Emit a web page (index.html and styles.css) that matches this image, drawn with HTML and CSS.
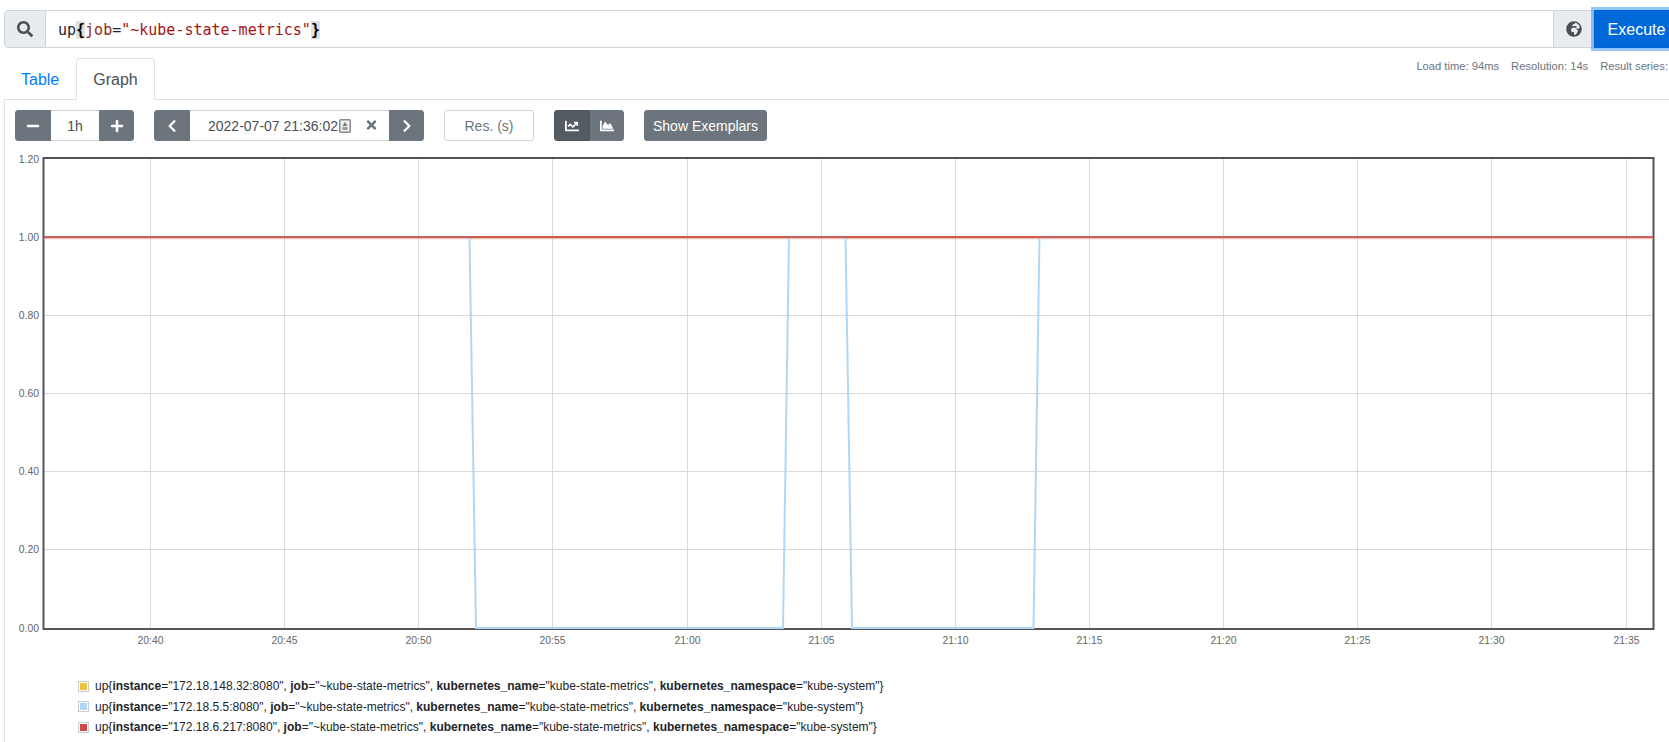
FILE: index.html
```html
<!DOCTYPE html>
<html lang="en">
<head>
    <meta charset="UTF-8">
    <meta name="viewport" content="width=device-width, initial-scale=1.0">
    <title>Prometheus Time Series Collection and Processing Server</title>
    <link rel="stylesheet" href="styles.css">
</head>
<body>
    <div class="query-row">
        <div class="prepend">
            <svg class="icon-search" viewBox="0 0 512 512"><path d="M505 442.7L405.3 343c-4.5-4.5-10.6-7-17-7H372c27.6-35.3 44-79.7 44-128C416 93.1 322.9 0 208 0S0 93.1 0 208s93.1 208 208 208c48.3 0 92.7-16.4 128-44v16.3c0 6.4 2.5 12.5 7 17l99.7 99.7c9.4 9.4 24.6 9.4 33.9 0l28.3-28.3c9.4-9.4 9.4-24.6.1-34zM208 336c-70.7 0-128-57.2-128-128 0-70.7 57.2-128 128-128 70.7 0 128 57.2 128 128 0 70.7-57.2 128-128 128z"/></svg>
        </div>
        <div class="expr"><span class="metric">up</span><span class="brace">{</span><span class="label-name">job</span><span class="metric">=</span><span class="label-value">"~kube-state-metrics"</span><span class="brace">}</span></div>
        <div class="append">
            <svg class="icon-globe" viewBox="0 0 496 512"><path d="M248 8C111.03 8 0 119.03 0 256s111.03 248 248 248 248-111.03 248-248S384.97 8 248 8zm160 215.5v6.93c0 5.87-3.32 11.24-8.57 13.86l-15.39 7.7a15.485 15.485 0 0 1-15.53-.97l-18.21-12.14a15.52 15.52 0 0 0-13.5-1.81l-2.65.88c-9.7 3.23-13.66 14.79-7.99 23.3l13.24 19.86c2.87 4.31 7.71 6.9 12.89 6.9h8.21c8.56 0 15.5 6.94 15.5 15.5v11.34c0 3.35-1.09 6.62-3.1 9.3l-18.74 24.98c-1.42 1.9-2.39 4.1-2.83 6.43l-4.3 22.83c-.62 3.29-2.29 6.29-4.76 8.56a159.608 159.608 0 0 0-25 29.16l-13.03 19.55a27.756 27.756 0 0 1-23.09 12.36c-10.51 0-20.12-5.94-24.82-15.34a78.902 78.902 0 0 1-8.33-35.29V367.5c0-8.56-6.94-15.5-15.5-15.5h-25.88c-14.49 0-28.38-5.76-38.63-16a54.659 54.659 0 0 1-16-38.63v-14.06c0-17.19 8.1-33.38 21.85-43.7l27.58-20.69a54.663 54.663 0 0 1 32.78-10.93h.89c8.48 0 16.85 1.97 24.43 5.77l14.72 7.36c3.68 1.84 7.93 2.14 11.83.84l47.31-15.77c6.33-2.11 10.6-8.03 10.6-14.7 0-8.56-6.94-15.5-15.5-15.5h-10.09c-4.11 0-8.05-1.63-10.96-4.54l-6.92-6.92a15.487 15.487 0 0 0-10.96-4.54H199.5c-8.56 0-15.5-6.94-15.5-15.5v-4.4c0-7.11 4.84-13.31 11.74-15.04l14.45-3.61c3.74-.94 7-3.23 9.14-6.44l8.08-12.11c2.87-4.31 7.71-6.9 12.89-6.9h24.21c8.56 0 15.5-6.94 15.5-15.5v-21.7C359.23 71.63 422.86 131.02 441.93 208H423.5c-8.56 0-15.5 6.94-15.5 15.5z"/></svg>
        </div>
        <button class="execute">Execute</button>
    </div>

    <div class="tab-row">
        <a class="tab">Table</a>
        <a class="tab active">Graph</a>
        <div class="stats">
            <span>Load time: 94ms</span>
            <span>Resolution: 14s</span>
            <span>Result series:</span>
        </div>
    </div>

    <div class="panel">
        <div class="controls">
            <div class="group">
                <button class="btn btn-step"><svg class="icon-14" viewBox="0 0 448 512"><path d="M416 208H32c-17.67 0-32 14.33-32 32v32c0 17.67 14.33 32 32 32h384c17.67 0 32-14.33 32-32v-32c0-17.67-14.33-32-32-32z"/></svg></button>
                <div class="field field-range">1h</div>
                <button class="btn btn-step-end"><svg class="icon-14" viewBox="0 0 448 512"><path d="M416 208H272V64c0-17.67-14.33-32-32-32h-32c-17.67 0-32 14.33-32 32v144H32c-17.67 0-32 14.33-32 32v32c0 17.67 14.33 32 32 32h144v144c0 17.67 14.33 32 32 32h32c17.67 0 32-14.33 32-32V304h144c17.67 0 32-14.33 32-32v-32c0-17.67-14.33-32-32-32z"/></svg></button>
            </div>
            <div class="group">
                <button class="btn btn-step"><svg class="icon-14" viewBox="0 0 320 512"><path d="M34.52 239.03L228.87 44.69c9.37-9.37 24.57-9.37 33.94 0l22.67 22.67c9.36 9.36 9.37 24.52.04 33.9L131.49 256l154.02 154.75c9.34 9.38 9.32 24.54-.04 33.9l-22.67 22.67c-9.37 9.37-24.57 9.37-33.94 0L34.52 272.97c-9.37-9.37-9.37-24.57 0-33.94z"/></svg></button>
                <div class="field field-date">
                    <span>2022-07-07 21:36:02</span>
                    <svg class="icon-cal" viewBox="0 0 12 14"><rect x="0.75" y="0.75" width="10.5" height="12.5" rx="1" fill="#eee" stroke="#8a8a8a" stroke-width="1.5"/><path d="M6 3l2.5 4h-5z" fill="#777"/><rect x="3.5" y="8" width="5" height="3" fill="#999"/></svg>
                    <svg class="icon-clear" viewBox="0 0 352 512"><path d="M242.72 256l100.07-100.07c12.28-12.28 12.28-32.19 0-44.48l-22.24-22.24c-12.28-12.28-32.19-12.28-44.48 0L176 189.28 75.93 89.21c-12.28-12.28-32.19-12.28-44.48 0L9.21 111.45c-12.28 12.28-12.28 32.19 0 44.48L109.28 256 9.21 356.07c-12.28 12.28-12.28 32.19 0 44.48l22.24 22.24c12.28 12.28 32.2 12.28 44.48 0L176 322.72l100.07 100.07c12.28 12.28 32.2 12.28 44.48 0l22.24-22.24c12.28-12.28 12.28-32.19 0-44.48L242.72 256z"/></svg>
                </div>
                <button class="btn btn-step-end"><svg class="icon-14" viewBox="0 0 320 512"><path d="M285.476 272.971L91.132 467.314c-9.373 9.373-24.569 9.373-33.941 0l-22.667-22.667c-9.357-9.357-9.375-24.522-.04-33.901L188.505 256 34.484 101.255c-9.335-9.379-9.317-24.544.04-33.901l22.667-22.667c9.373-9.373 24.569-9.373 33.941 0L285.475 239.03c9.373 9.372 9.373 24.568.001 33.941z"/></svg></button>
            </div>
            <div class="res">Res. (s)</div>
            <div class="group">
                <button class="btn btn-lines"><svg class="icon-14" viewBox="0 0 512 512"><path d="M496 384H64V80c0-8.84-7.16-16-16-16H16C7.16 64 0 71.16 0 80v336c0 17.67 14.33 32 32 32h464c8.84 0 16-7.16 16-16v-32c0-8.84-7.16-16-16-16zM464 96H345.94c-21.38 0-32.09 25.85-16.97 40.97l32.4 32.4L288 242.75l-73.37-73.37c-12.5-12.5-32.76-12.5-45.25 0l-68.69 68.69c-6.25 6.25-6.25 16.38 0 22.63l22.62 22.62c6.25 6.25 16.38 6.25 22.63 0L192 237.25l73.37 73.37c12.5 12.5 32.76 12.5 45.25 0l96-96 32.4 32.4c15.12 15.12 40.97 4.41 40.97-16.97V112c.01-8.84-7.15-16-16-16z"/></svg></button>
                <button class="btn btn-area"><svg class="icon-14" viewBox="0 0 512 512"><path d="M500 384c6.6 0 12 5.4 12 12v40c0 6.6-5.4 12-12 12H12c-6.6 0-12-5.4-12-12V76c0-6.6 5.4-12 12-12h40c6.6 0 12 5.4 12 12v308h436zM372.7 159.5L288 216l-85.3-113.7c-5.1-6.8-15.5-6.3-19.9 1L96 248v104h384l-89.9-187.8c-3.2-6.5-11.4-8.7-17.4-4.7z"/></svg></button>
            </div>
            <button class="btn btn-exemplars">Show Exemplars</button>
        </div>

        <!-- viewBox uses page coordinates so the ticks are easy to read off -->
        <svg class="chart" viewBox="15 145 1645 522">
            <g class="grid">
                <path d="M150.5 158V629M284.5 158V629M418.5 158V629M552.5 158V629M687.5 158V629M821.5 158V629M955.5 158V629M1089.5 158V629M1223.5 158V629M1357.5 158V629M1491.5 158V629M1626.5 158V629"/>
                <path d="M44 237H1653M44 315.5H1653M44 393.5H1653M44 471.5H1653M44 549.5H1653"/>
            </g>
            <rect class="plot-border" x="43.5" y="158" width="1610" height="471"/>

            <g class="shadows">
                <path d="M44 238.6H1653"/>
            </g>
            <path class="series series-yellow" d="M44 237H1653"/>
            <path class="series series-blue" d="M44 237H469.5L476 628H783L789 237H845.5L852 628H1033.5L1039.5 237H1653"/>
            <path class="series series-red" d="M44 237H1653"/>

            <g class="y-ticks">
                <text x="39" y="162.5">1.20</text>
                <text x="39" y="241">1.00</text>
                <text x="39" y="319">0.80</text>
                <text x="39" y="397">0.60</text>
                <text x="39" y="475">0.40</text>
                <text x="39" y="553">0.20</text>
                <text x="39" y="632">0.00</text>
            </g>
            <g class="x-ticks">
                <text x="150.5" y="644">20:40</text>
                <text x="284.5" y="644">20:45</text>
                <text x="418.5" y="644">20:50</text>
                <text x="552.5" y="644">20:55</text>
                <text x="687.5" y="644">21:00</text>
                <text x="821.5" y="644">21:05</text>
                <text x="955.5" y="644">21:10</text>
                <text x="1089.5" y="644">21:15</text>
                <text x="1223.5" y="644">21:20</text>
                <text x="1357.5" y="644">21:25</text>
                <text x="1491.5" y="644">21:30</text>
                <text x="1626.5" y="644">21:35</text>
            </g>
        </svg>

        <div class="legend">
            <div class="legend-item">
                <span class="swatch"><i class="dot-yellow"></i></span>
                <span>up{<b>instance</b>="172.18.148.32:8080", <b>job</b>="~kube-state-metrics", <b>kubernetes_name</b>="kube-state-metrics", <b>kubernetes_namespace</b>="kube-system"}</span>
            </div>
            <div class="legend-item">
                <span class="swatch"><i class="dot-blue"></i></span>
                <span>up{<b>instance</b>="172.18.5.5:8080", <b>job</b>="~kube-state-metrics", <b>kubernetes_name</b>="kube-state-metrics", <b>kubernetes_namespace</b>="kube-system"}</span>
            </div>
            <div class="legend-item">
                <span class="swatch"><i class="dot-red"></i></span>
                <span>up{<b>instance</b>="172.18.6.217:8080", <b>job</b>="~kube-state-metrics", <b>kubernetes_name</b>="kube-state-metrics", <b>kubernetes_namespace</b>="kube-system"}</span>
            </div>
        </div>
    </div>
</body>
</html>
```

FILE: styles.css
```css
html, body {
    margin: 0;
    padding: 0;
    height: 742px;
    overflow: hidden;
}
body {
    font-family: "Liberation Sans", Arial, sans-serif;
    font-size: 14px;
    color: #212529;
    background: white;
}
button {
    font-family: inherit;
}

/* query bar */
.query-row {
    display: flex;
    width: 1675px;
    height: 38px;
    margin: 10px 0 0 4px;
}
.prepend {
    display: flex;
    align-items: center;
    justify-content: center;
    box-sizing: border-box;
    width: 42px;
    background: #e9ecef;
    border: 1px solid #ced4da;
    border-radius: 4px 0 0 4px;
}
.icon-search {
    width: 16px;
    height: 16px;
    fill: #495057;
}
.expr {
    flex: 1;
    display: flex;
    align-items: center;
    padding: 1px 0 0 12px;
    border-top: 1px solid #ced4da;
    border-bottom: 1px solid #ced4da;
    font-family: "DejaVu Sans Mono", monospace;
    font-size: 15px;
    white-space: pre;
}
.metric {
    color: #1c2833;
}
.brace {
    color: #000;
    font-weight: bold;
    background: #e0e0e0;
}
.label-name {
    color: #8f2a1a;
}
.label-value {
    color: #a31515;
}
.append {
    display: flex;
    align-items: center;
    justify-content: center;
    box-sizing: border-box;
    width: 41px;
    background: #e9ecef;
    border: 1px solid #ced4da;
}
.icon-globe {
    width: 16px;
    height: 16px;
    fill: #495057;
}
.execute {
    width: 85px;
    padding: 1px 0 0;
    background: #0069d9;
    color: white;
    font-size: 16px;
    border: 1px solid #0062cc;
    border-radius: 0 4px 4px 0;
    box-shadow: 0 0 0 3px rgba(38, 143, 255, 0.5);
}

/* tabs */
.tab-row {
    display: flex;
    box-sizing: border-box;
    width: 1665px;
    height: 42px;
    margin: 10px 0 0 4px;
    border-bottom: 1px solid #dee2e6;
}
.tab {
    box-sizing: border-box;
    height: 42px;
    padding: 9px 16px 7px;
    font-size: 16px;
    line-height: 24px;
    color: #007bff;
    border: 1px solid transparent;
    border-radius: 4px 4px 0 0;
}
.tab.active {
    color: #495057;
    background: white;
    border-color: #dee2e6 #dee2e6 white;
}
.stats {
    display: flex;
    gap: 12px;
    margin-left: auto;
    padding: 0 1px 0 0;
    font-size: 11.2px;
    line-height: 16px;
    color: #6c757d;
}

/* graph panel */
.panel {
    box-sizing: border-box;
    height: 643px;
    margin-left: 4px;
    padding: 10px;
    border-left: 1px solid #dee2e6;
}
.controls {
    display: flex;
    gap: 20px;
    height: 31px;
}
.group {
    display: flex;
}
.btn {
    display: flex;
    align-items: center;
    justify-content: center;
    box-sizing: border-box;
    height: 31px;
    padding: 0;
    color: white;
    font-size: 14px;
    background: #6c757d;
    border: 1px solid #6c757d;
    border-radius: 0;
}
.btn-step {
    width: 36px;
    border-radius: 3px 0 0 3px;
}
.btn-step-end {
    width: 35px;
    border-radius: 0 3px 3px 0;
}
.btn-lines {
    width: 36px;
    background: #545b62;
    border-color: #4e555b;
    border-radius: 3px 0 0 3px;
}
.btn-area {
    width: 34px;
    border-radius: 0 3px 3px 0;
}
.btn-exemplars {
    width: 123px;
    border-radius: 3px;
}
.icon-14 {
    width: 14px;
    height: 14px;
    fill: white;
}
.field {
    display: flex;
    align-items: center;
    box-sizing: border-box;
    height: 31px;
    color: #495057;
    border-top: 1px solid #ced4da;
    border-bottom: 1px solid #ced4da;
}
.field-range {
    justify-content: center;
    width: 48px;
}
.field-date {
    width: 199px;
    padding-left: 18px;
}
.icon-cal {
    width: 12px;
    height: 14px;
    margin-left: 1px;
}
.icon-clear {
    width: 11px;
    height: 14px;
    margin: 0 0 2px 15px;
    fill: #6c757d;
}
.res {
    display: flex;
    align-items: center;
    justify-content: center;
    box-sizing: border-box;
    width: 90px;
    height: 31px;
    color: #6c757d;
    border: 1px solid #ced4da;
    border-radius: 3px;
}

/* chart */
.chart {
    display: block;
    width: 1645px;
    height: 522px;
    margin-top: 4px;
}
.grid path {
    fill: none;
    stroke: #d9d9d9;
    stroke-width: 1;
}
.plot-border {
    fill: none;
    stroke: #545454;
    stroke-width: 2;
}
.shadows path {
    fill: none;
    stroke: #e9b0a0;
    stroke-width: 1.5;
    opacity: 0.8;
}
.series {
    fill: none;
    stroke-width: 2;
}
.series-yellow {
    stroke: #edc240;
}
.series-blue {
    stroke: #afd8f8;
}
.series-red {
    stroke: #cb4b4b;
    stroke-opacity: 0.85;
}
.y-ticks text,
.x-ticks text {
    font-size: 10.4px;
    fill: #666;
}
.y-ticks text {
    text-anchor: end;
}
.x-ticks text {
    text-anchor: middle;
}

/* legend */
.legend {
    margin: 9px 0 0 63px;
    font-size: 12.02px;
    color: #212529;
}
.legend-item {
    display: flex;
    align-items: center;
    gap: 6px;
    height: 20.5px;
}
.swatch {
    display: block;
    box-sizing: border-box;
    width: 11px;
    height: 11px;
    padding: 1px;
    border: 1px solid #ccc;
}
.swatch i {
    display: block;
    width: 7px;
    height: 7px;
}
.dot-yellow {
    background: #edc240;
}
.dot-blue {
    background: #afd8f8;
}
.dot-red {
    background: #cb4b4b;
}
```
